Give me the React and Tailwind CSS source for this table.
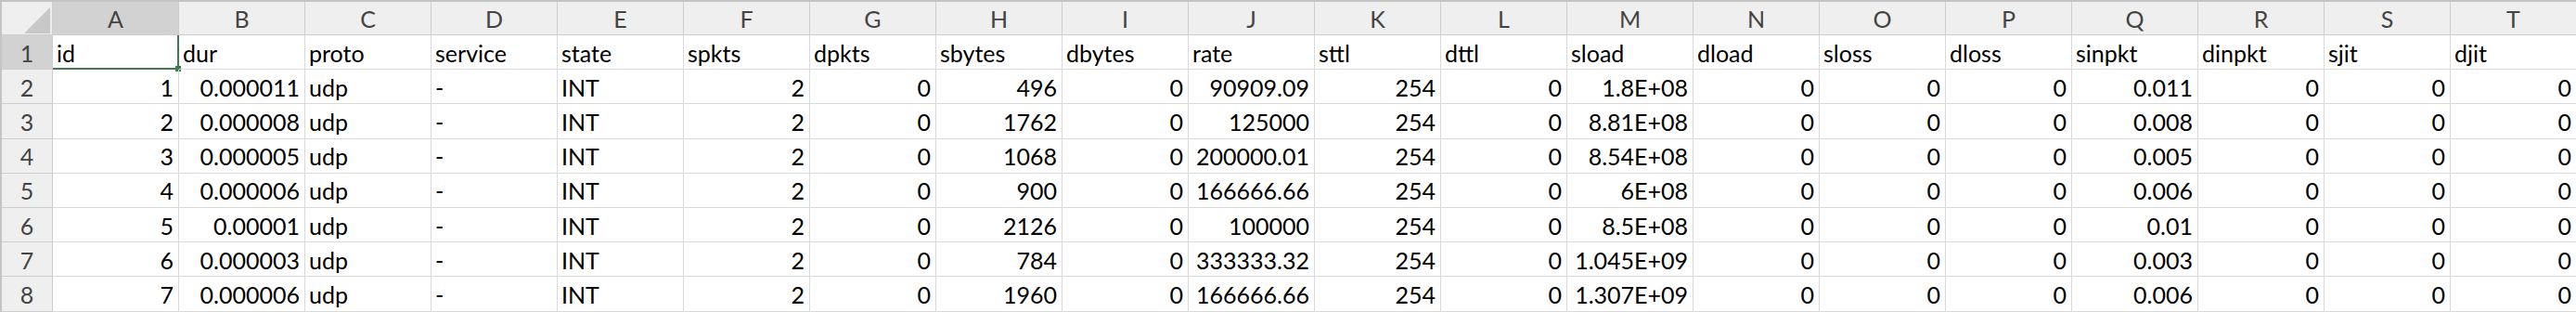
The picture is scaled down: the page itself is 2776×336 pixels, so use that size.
import React from 'react';

const letters = 'ABCDEFGHIJKLMNOPQRST'.split('');

const header = [
  'id', 'dur', 'proto', 'service', 'state', 'spkts', 'dpkts', 'sbytes', 'dbytes', 'rate',
  'sttl', 'dttl', 'sload', 'dload', 'sloss', 'dloss', 'sinpkt', 'dinpkt', 'sjit', 'djit',
];

const data = [
  ['1', '0.000011', 'udp', '-', 'INT', '2', '0', '496', '0', '90909.09', '254', '0', '1.8E+08', '0', '0', '0', '0.011', '0', '0', '0'],
  ['2', '0.000008', 'udp', '-', 'INT', '2', '0', '1762', '0', '125000', '254', '0', '8.81E+08', '0', '0', '0', '0.008', '0', '0', '0'],
  ['3', '0.000005', 'udp', '-', 'INT', '2', '0', '1068', '0', '200000.01', '254', '0', '8.54E+08', '0', '0', '0', '0.005', '0', '0', '0'],
  ['4', '0.000006', 'udp', '-', 'INT', '2', '0', '900', '0', '166666.66', '254', '0', '6E+08', '0', '0', '0', '0.006', '0', '0', '0'],
  ['5', '0.00001', 'udp', '-', 'INT', '2', '0', '2126', '0', '100000', '254', '0', '8.5E+08', '0', '0', '0', '0.01', '0', '0', '0'],
  ['6', '0.000003', 'udp', '-', 'INT', '2', '0', '784', '0', '333333.32', '254', '0', '1.045E+09', '0', '0', '0', '0.003', '0', '0', '0'],
  ['7', '0.000006', 'udp', '-', 'INT', '2', '0', '1960', '0', '166666.66', '254', '0', '1.307E+09', '0', '0', '0', '0.006', '0', '0', '0'],
];

const isNumber = (v) => v !== '-' && v !== '' && !isNaN(Number(v));

function Cell({ value, selected }) {
  const num = isNumber(value);
  return (
    <div
      className={`relative w-[136px] shrink-0 h-full border-r border-b border-[#d9d9d9] flex items-center pt-[2px] whitespace-nowrap overflow-visible ${
        num ? 'justify-end pr-[5px]' : 'justify-start pl-[4px]'
      }`}
    >
      {value}
      {selected && (
        <>
          <div className="absolute left-0 top-0 right-[-1px] bottom-[-1px] border-r-2 border-b-2 border-[#3f7a55] pointer-events-none" />
          <div className="absolute right-[-3px] bottom-[-3px] w-[6px] h-[6px] bg-[#3f7a55]" />
        </>
      )}
    </div>
  );
}

function RowHead({ n, selected }) {
  return (
    <div
      className={`w-[55px] shrink-0 h-full border-r border-b border-[#cdcdcd] flex items-center justify-center pt-[2px] text-[#444] ${
        selected ? 'bg-[#d2d2d2]' : 'bg-[#efefef]'
      }`}
    >
      {n}
    </div>
  );
}

export default function App() {
  return (
    <div className="w-[2776px] h-[336px] overflow-hidden bg-white border-t-2 border-l-2 border-[#c4c4c4] font-[Lato,sans-serif] text-[25px] text-black leading-none">
      {/* column letters */}
      <div className="flex h-[36px]">
        <div className="w-[55px] shrink-0 h-full border-r border-b border-[#cdcdcd] bg-[#efefef] flex items-end justify-end pr-[2px] pb-[1px]">
          <svg width="28" height="28" viewBox="0 0 28 28">
            <polygon points="28,0 28,28 0,28" fill="#c8c8c8" />
          </svg>
        </div>
        {letters.map((l, i) => (
          <div
            key={l}
            className={`w-[136px] shrink-0 h-full border-r border-b border-[#cdcdcd] flex items-center justify-center pt-[2px] text-[#444] ${
              i === 0 ? 'bg-[#d2d2d2]' : 'bg-[#efefef]'
            }`}
          >
            {l}
          </div>
        ))}
      </div>

      {/* header row */}
      <div className="flex h-[37.2px]">
        <RowHead n={1} selected />
        {header.map((h, i) => (
          <Cell key={h} value={h} selected={i === 0} />
        ))}
      </div>

      {data.map((row, r) => (
        <div key={r} className="flex h-[37.2px]">
          <RowHead n={r + 2} />
          {row.map((v, c) => (
            <Cell key={c} value={v} />
          ))}
        </div>
      ))}

      {/* next row, only its top edge shows */}
      <div className="flex h-[37.2px]">
        <RowHead n="" />
        {letters.map((l) => (
          <Cell key={l} value="" />
        ))}
      </div>
    </div>
  );
}
